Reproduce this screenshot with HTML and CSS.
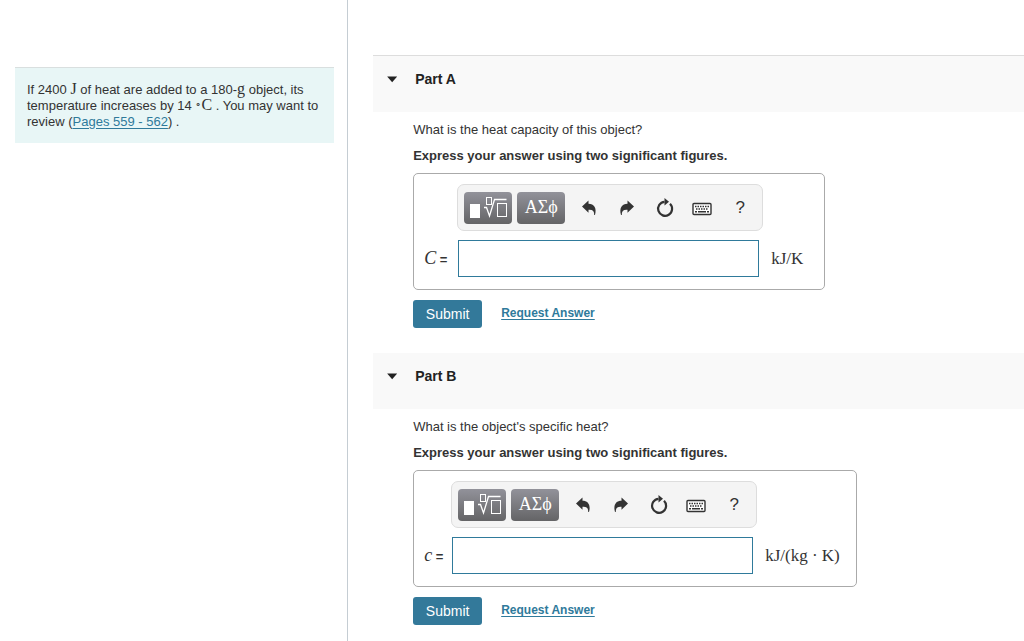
FILE: index.html
```html
<!DOCTYPE html>
<html lang="en">
<head>
    <meta charset="UTF-8">
    <meta name="viewport" content="width=device-width, initial-scale=1.0">
    <title>Heat capacity</title>
    <link rel="stylesheet" href="styles.css">
</head>
<body>
    <!-- Shared icons -->
    <svg class="sprite" aria-hidden="true">
        <symbol id="icon-template" viewBox="0 0 38 24">
            <rect x="1" y="8" width="10" height="14" fill="#fff"/>
            <g fill="none" stroke="#fff">
                <rect x="17.5" y="1.5" width="5" height="7"/>
                <path d="M15 11.5h2.5l3 8.500L25.500 3.500h12" stroke-width="1.3"/>
                <rect x="28.5" y="7.5" width="9" height="13"/>
            </g>
        </symbol>
        <symbol id="icon-undo" viewBox="0 0 16 16">
            <path d="M1 6.500 7.500 .5v3.300c5.500 0 8.500 4.200 6.500 11.200h-.8c.3-3.800-1.700-5.600-5.700-5.200v3z"/>
        </symbol>
        <symbol id="icon-redo" viewBox="0 0 16 16">
            <path d="M15 6.500 8.500 .5v3.300c-5.500 0-8.500 4.200-6.500 11.200h.8c-.3-3.800 1.700-5.600 5.700-5.200v3z"/>
        </symbol>
        <symbol id="icon-reset" viewBox="0 0 18 20">
            <path d="M14 5.800A7 7 0 1 1 8.500 3.800" fill="none" stroke="currentColor" stroke-width="2.200"/>
            <path d="M8.500 0 13 3.700 8.500 7.500z"/>
        </symbol>
        <symbol id="icon-keyboard" viewBox="0 0 20 14">
            <rect x="1" y="1.500" width="18" height="11" rx="1" fill="#fff" stroke="currentColor" stroke-width="1.400"/>
            <path d="M3 4.500h14M4 7h12" fill="none" stroke="currentColor" stroke-width="1.500" stroke-dasharray="1.500 1"/>
            <path d="M3 9.800h2M6 9.800h8M15 9.800h2" fill="none" stroke="currentColor" stroke-width="1.500"/>
        </symbol>
    </svg>

    <div class="page">
        <aside class="sidebar">
            <p class="problem">If 2400 <span class="math">J</span> of heat are added to a 180-<span class="math">g</span> object, its temperature increases by 14 <span class="math"><span class="degree">∘</span>C</span> . You may want to review (<a href="#">Pages 559 - 562</a>) .</p>
        </aside>

        <main class="content">
            <section class="part">
                <header class="part-header">
                    <button class="toggle" type="button" aria-label="Collapse Part A"></button>
                    <h2>Part A</h2>
                </header>
                <form class="part-body">
                    <p>What is the heat capacity of this object?</p>
                    <p class="instructions">Express your answer using two significant figures.</p>
                    <div class="answer answer-a">
                        <div class="toolbar">
                            <button class="palette" type="button" aria-label="Templates"><svg width="38" height="24"><use href="#icon-template"/></svg></button>
                            <button class="palette" type="button">ΑΣϕ</button>
                            <button class="tool" type="button" aria-label="Undo"><svg width="16" height="16"><use href="#icon-undo"/></svg></button>
                            <button class="tool" type="button" aria-label="Redo"><svg width="16" height="16"><use href="#icon-redo"/></svg></button>
                            <button class="tool" type="button" aria-label="Reset"><svg width="18" height="20"><use href="#icon-reset"/></svg></button>
                            <button class="tool" type="button" aria-label="Keyboard"><svg class="keyboard" width="20" height="14"><use href="#icon-keyboard"/></svg></button>
                            <button class="tool" type="button">?</button>
                        </div>
                        <label for="capacity"><i>C</i> =</label>
                        <input type="text" id="capacity">
                        <span class="unit">kJ/K</span>
                    </div>
                    <div class="actions">
                        <button class="submit" type="button">Submit</button>
                        <a href="#">Request Answer</a>
                    </div>
                </form>
            </section>

            <section class="part">
                <header class="part-header">
                    <button class="toggle" type="button" aria-label="Collapse Part B"></button>
                    <h2>Part B</h2>
                </header>
                <form class="part-body">
                    <p>What is the object's specific heat?</p>
                    <p class="instructions">Express your answer using two significant figures.</p>
                    <div class="answer answer-b">
                        <div class="toolbar">
                            <button class="palette" type="button" aria-label="Templates"><svg width="38" height="24"><use href="#icon-template"/></svg></button>
                            <button class="palette" type="button">ΑΣϕ</button>
                            <button class="tool" type="button" aria-label="Undo"><svg width="16" height="16"><use href="#icon-undo"/></svg></button>
                            <button class="tool" type="button" aria-label="Redo"><svg width="16" height="16"><use href="#icon-redo"/></svg></button>
                            <button class="tool" type="button" aria-label="Reset"><svg width="18" height="20"><use href="#icon-reset"/></svg></button>
                            <button class="tool" type="button" aria-label="Keyboard"><svg class="keyboard" width="20" height="14"><use href="#icon-keyboard"/></svg></button>
                            <button class="tool" type="button">?</button>
                        </div>
                        <label for="specific"><i>c</i> =</label>
                        <input type="text" id="specific">
                        <span class="unit">kJ/(kg · K)</span>
                    </div>
                    <div class="actions">
                        <button class="submit" type="button">Submit</button>
                        <a href="#">Request Answer</a>
                    </div>
                </form>
            </section>
        </main>
    </div>
</body>
</html>
```
FILE: styles.css
```css
* {
    box-sizing: border-box;
}

body {
    margin: 0;
    font-family: "Liberation Sans", Arial, sans-serif;
    font-size: 13px;
    line-height: 16px;
    color: #333;
    background: #fff;
}

p, h2 {
    margin: 0;
}

button {
    border: none;
    padding: 0;
    font-family: inherit;
    cursor: pointer;
}

a {
    color: #2f7a9b;
    text-underline-offset: 2px;
}

.sprite {
    display: none;
}

.page {
    display: flex;
    min-height: 100vh;
}

/* Left column */
.sidebar {
    flex: 0 0 34%;
    padding: 67px 13px 0 15px;
    border-right: 1px solid #c5cdd3;
}

.problem {
    padding: 14px 12px 13px;
    border-top: 1px solid #d9dfdf;
    background: #e8f6f6;
}

.math {
    font-family: "Liberation Serif", serif;
    font-size: 16px;
    line-height: 12px;
}

.degree {
    font-size: 10px;
    line-height: 1px;
    vertical-align: 3px;
}

/* Right column */
.content {
    flex: 1;
    padding: 55px 0 0 25px;
}

.part {
    margin-bottom: 25px;
}

.part-header {
    display: flex;
    align-items: flex-start;
    gap: 18px;
    height: 56px;
    padding: 15px 14px;
    background: #f9f9f9;
}

.part:first-child .part-header {
    height: 57px;
    border-top: 1px solid #ddd;
}

.part-header h2 {
    font-size: 14px;
    line-height: 16px;
    color: #222;
}

.toggle {
    width: 10px;
    height: 16px;
    background: #222;
    clip-path: polygon(0 35%, 100% 35%, 50% 70%);
}

.part-body {
    padding: 10px 0 0 40px;
}

.instructions {
    margin: 10px 0 9px;
    font-weight: bold;
}

/* Answer box */
.answer {
    display: inline-grid;
    column-gap: 8px;
    row-gap: 9px;
    align-items: center;
    padding: 10px 17px 12px 10px;
    border: 1px solid #aaa;
    border-radius: 5px;
    vertical-align: top;
}

.answer-a {
    grid-template-columns: 25px 306px 36px;
}

.answer-b {
    grid-template-columns: 19px 306px 74px;
}

.toolbar {
    grid-column: 2;
    display: flex;
    align-items: center;
    height: 47px;
    padding: 0 3px 0 6px;
    border: 1px solid #ddd;
    border-radius: 7px;
    background: #f4f4f4;
}

.palette {
    display: flex;
    align-items: center;
    justify-content: center;
    width: 48px;
    height: 32px;
    margin-right: 5px;
    border-radius: 4px;
    background: linear-gradient(#92929a, #646466);
    color: #fff;
    font-family: "Liberation Serif", serif;
    font-size: 18px;
}

.tool {
    display: flex;
    flex: 1;
    align-items: center;
    justify-content: center;
    background: none;
    color: #333;
    font-size: 17px;
    fill: currentColor;
}

.keyboard {
    margin-top: 3px;
}

.answer label {
    grid-column: 1;
    font-weight: bold;
    font-size: 13px;
    white-space: nowrap;
}

.answer i {
    font-family: "Liberation Serif", serif;
    font-size: 18px;
    font-weight: normal;
}

.answer input {
    width: 301px;
    height: 37px;
    margin-left: 1px;
    padding: 0 8px;
    border: 1px solid #2f7a9b;
    font-size: 16px;
    outline: none;
}

.unit {
    font-family: "Liberation Serif", serif;
    font-size: 17px;
    white-space: nowrap;
}

/* Buttons below the box */
.actions {
    display: flex;
    gap: 19px;
    margin-top: 10px;
}

.submit {
    width: 69px;
    height: 28px;
    border-radius: 3px;
    background: #33799a;
    color: #fff;
    font-size: 14px;
}

.actions a {
    padding-top: 5px;
    font-size: 12px;
    font-weight: bold;
}
```
